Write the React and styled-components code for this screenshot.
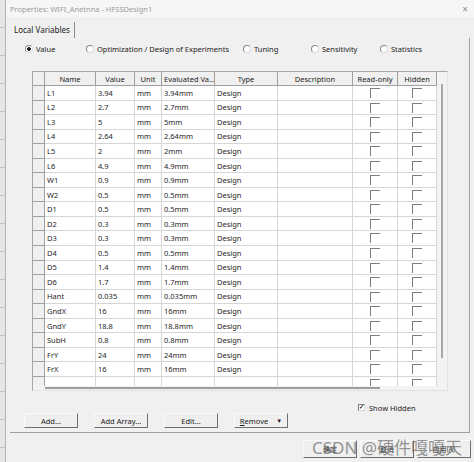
import styled, { createGlobalStyle } from "styled-components";

const GlobalStyle = createGlobalStyle`
  html, body {
    margin: 0;
    padding: 0;
    background: #f0f0f0;
  }
  body {
    font-family: "Noto Sans", "Open Sans", sans-serif;
    color: #222;
  }
`;

const COLS = "12px 51px 39px 27px 53px 63px 75px 45px 39px";

const rows = [
  ["L1", "3.94"],
  ["L2", "2.7"],
  ["L3", "5"],
  ["L4", "2.64"],
  ["L5", "2"],
  ["L6", "4.9"],
  ["W1", "0.9"],
  ["W2", "0.5"],
  ["D1", "0.5"],
  ["D2", "0.3"],
  ["D3", "0.3"],
  ["D4", "0.5"],
  ["D5", "1.4"],
  ["D6", "1.7"],
  ["Hant", "0.035"],
  ["GndX", "16"],
  ["GndY", "18.8"],
  ["SubH", "0.8"],
  ["FrY", "24"],
  ["FrX", "16"],
];

const radios = [
  { label: "Value", w: 61, on: true },
  { label: "Optimization / Design of Experiments", w: 157 },
  { label: "Tuning", w: 68 },
  { label: "Sensitivity", w: 69 },
  { label: "Statistics", w: 60 },
];

const App = () => {
  return (
    <Root>
      <GlobalStyle />
      <BackWindow />
      <Dialog>
        <TitleBar>
          <span>Properties: WIFI_Anetnna - HFSSDesign1</span>
          <Close>×</Close>
        </TitleBar>
        <TabStrip>
          <Tab>Local Variables</Tab>
        </TabStrip>
        <Panel>
          <RadioRow>
            {radios.map((r) => (
              <RadioItem key={r.label} $w={r.w}>
                <RadioDot $on={r.on} />
                {r.label}
              </RadioItem>
            ))}
          </RadioRow>

          <TableBox>
            <TableMain>
              <HeaderRow>
                <HeadCell />
                <HeadCell>Name</HeadCell>
                <HeadCell>Value</HeadCell>
                <HeadCell>Unit</HeadCell>
                <HeadCell $left>Evaluated Va...</HeadCell>
                <HeadCell>Type</HeadCell>
                <HeadCell>Description</HeadCell>
                <HeadCell>Read-only</HeadCell>
                <HeadCell>Hidden</HeadCell>
              </HeaderRow>
              <Rows>
                {[...rows, ["", ""]].map(([name, val], i) => (
                  <Row key={i}>
                    <RowHead />
                    <Cell>{name}</Cell>
                    <Cell>{val}</Cell>
                    <Cell>{name && "mm"}</Cell>
                    <Cell>{name && `${val}mm`}</Cell>
                    <Cell>{name && "Design"}</Cell>
                    <Cell />
                    <BoxCell>
                      <Check />
                    </BoxCell>
                    <BoxCell>
                      <Check />
                    </BoxCell>
                  </Row>
                ))}
              </Rows>
              <HScroll>
                <HThumb />
              </HScroll>
            </TableMain>
            <VScroll>
              <VThumb />
            </VScroll>
          </TableBox>

          <ShowHiddenRow>
            <SmallCheck>✓</SmallCheck>
            Show Hidden
          </ShowHiddenRow>

          <ButtonRow>
            <Button>Add...</Button>
            <Button>Add Array...</Button>
            <Button>Edit...</Button>
            <Button>
              <span>
                <u>R</u>emove
              </span>
              <Arrow>▼</Arrow>
            </Button>
          </ButtonRow>
        </Panel>

        <Footer>
          <FooterButton>确定</FooterButton>
          <FooterButton>取消</FooterButton>
          <FooterButton>应用(A)</FooterButton>
        </Footer>
      </Dialog>
      <Watermark>CSDN @硬件嘎嘎天</Watermark>
    </Root>
  );
};

const Root = styled.div`
  position: relative;
  width: 474px;
  height: 462px;
  display: flex;
  overflow: hidden;
  background: #f0f0f0;
`;

const BackWindow = styled.div`
  width: 6px;
  flex-shrink: 0;
  background: repeating-linear-gradient(
    to bottom,
    #e6e6e6 0px,
    #e6e6e6 27px,
    #c4c4c4 27px,
    #c4c4c4 28px
  );
  border-right: 1px solid #b4b4b4;
  box-sizing: border-box;
`;

const Dialog = styled.div`
  width: 468px;
  display: flex;
  flex-direction: column;
  background: #f0f0f0;
`;

const TitleBar = styled.div`
  height: 17px;
  display: flex;
  align-items: center;
  justify-content: space-between;
  padding: 0 6px 0 4px;
  font-size: 7.5px;
  color: #9c9c9c;
  background: #f6f6f6;
`;

const Close = styled.span`
  font-size: 10px;
  color: #8c8c8c;
`;

const TabStrip = styled.div`
  height: 21px;
  display: flex;
  align-items: flex-end;
  padding-left: 8px;
`;

const Tab = styled.div`
  height: 16px;
  line-height: 16px;
  font-size: 8px;
  color: #1a1a1a;
  padding-right: 4px;
  border-right: 1px solid #8a8a8a;
  box-sizing: border-box;
  display: flex;
  align-items: center;
`;

const Panel = styled.div`
  margin-left: 4px;
  width: 460px;
  box-sizing: border-box;
  border-right: 1px solid #a0a0a0;
  border-bottom: 1px solid #a0a0a0;
  padding: 5px 0 4px 0;
  display: flex;
  flex-direction: column;
`;

const RadioRow = styled.div`
  height: 12px;
  display: flex;
  align-items: center;
  padding-left: 15px;
  font-size: 7.5px;
  color: #1a1a1a;
`;

const RadioItem = styled.label`
  width: ${(p) => p.$w}px;
  flex-shrink: 0;
  display: flex;
  align-items: center;
  gap: 3px;
  white-space: nowrap;
`;

const RadioDot = styled.span`
  width: 6px;
  height: 6px;
  border-radius: 50%;
  border: 1px solid #8a8a8a;
  border-right-color: #dcdcdc;
  border-bottom-color: #dcdcdc;
  background: ${(p) =>
    p.$on ? "radial-gradient(circle, #222 0 1.6px, #fff 1.8px)" : "#fff"};
`;

const TableBox = styled.div`
  margin: 16px 0 0 22px;
  width: 416px;
  height: 320px;
  box-sizing: border-box;
  border: 1px solid #a6a6a6;
  border-right-color: #e2e2e2;
  border-bottom-color: #e2e2e2;
  display: flex;
  background: #f3f3f3;
`;

const TableMain = styled.div`
  width: 404px;
  display: flex;
  flex-direction: column;
`;

const HeaderRow = styled.div`
  display: grid;
  grid-template-columns: ${COLS};
  height: 14px;
`;

const HeadCell = styled.div`
  box-sizing: border-box;
  border-right: 1px solid #a0a0a0;
  border-bottom: 1px solid #a0a0a0;
  background: #f0f0f0;
  font-size: 7.5px;
  color: #222;
  display: flex;
  align-items: center;
  justify-content: ${(p) => (p.$left ? "flex-start" : "center")};
  padding-left: ${(p) => (p.$left ? "2px" : "0")};
  white-space: nowrap;
  overflow: hidden;
`;

const Rows = styled.div`
  height: 300px;
  overflow: hidden;
  background: #fff;
`;

const Row = styled.div`
  display: grid;
  grid-template-columns: ${COLS};
  height: 14.55px;
`;

const RowHead = styled.div`
  box-sizing: border-box;
  background: #f0f0f0;
  border-right: 1px solid #a0a0a0;
  border-bottom: 1px solid #a0a0a0;
`;

const Cell = styled.div`
  box-sizing: border-box;
  border-right: 1px solid #d6d6d6;
  border-bottom: 1px solid #d6d6d6;
  font-size: 7.5px;
  color: #1e1e1e;
  padding-left: 2px;
  display: flex;
  align-items: center;
  white-space: nowrap;
  overflow: hidden;
`;

const BoxCell = styled(Cell)`
  justify-content: center;
  align-items: flex-start;
  padding: 2px 0 0 0;
`;

const Check = styled.span`
  width: 10px;
  height: 10px;
  box-sizing: border-box;
  border-top: 1px solid #7c7c7c;
  border-left: 1px solid #7c7c7c;
  background: #fff;
`;

const HScroll = styled.div`
  height: 4px;
  padding-left: 12px;
  display: flex;
  align-items: center;
`;

const HThumb = styled.div`
  width: 335px;
  height: 2px;
  background: #9c9c9c;
`;

const VScroll = styled.div`
  width: 10px;
  display: flex;
  justify-content: center;
  padding-top: 12px;
`;

const VThumb = styled.div`
  width: 2px;
  height: 274px;
  background: #a8a8a8;
`;

const ShowHiddenRow = styled.div`
  margin: 11px 0 0 348px;
  height: 11px;
  display: flex;
  align-items: center;
  gap: 4px;
  font-size: 7.5px;
  color: #1a1a1a;
`;

const SmallCheck = styled.span`
  width: 7px;
  height: 7px;
  box-sizing: border-box;
  border: 1px solid #7a7a7a;
  border-right-color: #d8d8d8;
  border-bottom-color: #d8d8d8;
  background: #fff;
  font-size: 6px;
  line-height: 5px;
  text-align: center;
  font-weight: bold;
  color: #222;
`;

const ButtonRow = styled.div`
  height: 15px;
  display: flex;
  gap: 16px;
  padding-left: 14px;
`;

const Button = styled.div`
  width: 54px;
  height: 15px;
  box-sizing: border-box;
  border: 1px solid #fafafa;
  border-right-color: #6e6e6e;
  border-bottom-color: #6e6e6e;
  background: #efefef;
  font-size: 7.5px;
  color: #1a1a1a;
  display: flex;
  align-items: center;
  justify-content: center;
  gap: 8px;
  white-space: nowrap;
`;

const Arrow = styled.span`
  font-size: 6px;
`;

const Footer = styled.div`
  flex: 1;
  display: flex;
  justify-content: flex-end;
  align-items: flex-start;
  gap: 3px;
  padding: 7px 3px 0 0;
`;

const FooterButton = styled(Button)`
  height: 18px;
  font-family: "Noto Sans CJK SC", "Noto Sans", sans-serif;
  font-size: 7px;
`;

const Watermark = styled.div`
  position: absolute;
  left: 312px;
  top: 437px;
  font-family: "Noto Sans", "Noto Sans CJK SC", sans-serif;
  font-size: 17px;
  line-height: 22px;
  color: rgba(110, 110, 110, 0.72);
  white-space: nowrap;
  pointer-events: none;
`;

export default App;
